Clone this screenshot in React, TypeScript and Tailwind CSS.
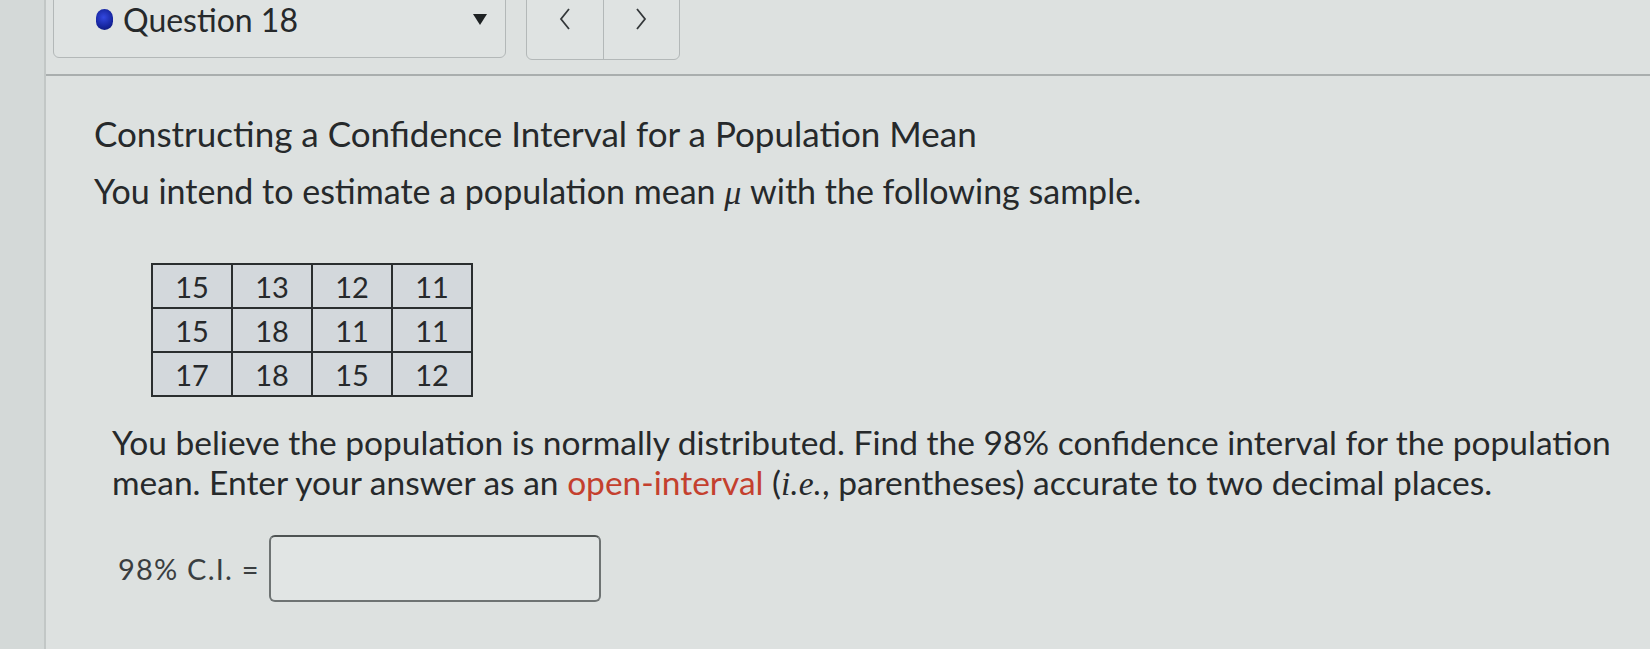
import React from 'react';

const ROWS = [
  [15, 13, 12, 11],
  [15, 18, 11, 11],
  [17, 18, 15, 12],
];

export default function App() {
  return (
    <div className="w-full h-[649px] overflow-hidden bg-[#dde1e0] text-[#26292b] font-['Lato',sans-serif] flex">
      {/* left gutter */}
      <div className="w-[46px] shrink-0 bg-[#d4d9d8] border-r-2 border-[#c2c7c6]" />

      <div className="flex-1 flex flex-col">
        {/* Question nav */}
        <div className="flex items-start h-[76px] border-b-2 border-[#a9aeae]">
          <div className="ml-[7px] mt-[-10px] w-[453px] h-[68px] border border-[#b3b8b8] rounded-b-md bg-[#dfe3e2] flex items-center pb-[9px] pl-[42px] pr-[18px]">
            <span className="w-[17px] h-[21px] rounded-full bg-[radial-gradient(circle_at_45%_40%,#3348e0,#16259e_60%,#0b1466)]" />
            <span className="ml-[10px] text-[32px] leading-[38px]">Question 18</span>
            <svg className="ml-auto" width="14" height="11" viewBox="0 0 14 11"><path d="M0 0 H14 L7 11 Z" fill="#1e2223" /></svg>
          </div>
          <div className="ml-[20px] mt-[-10px] w-[154px] h-[70px] border border-[#b3b8b8] rounded-b-md bg-[#dfe3e2] flex">
            <div className="flex-1 flex items-center justify-center pb-[12px] border-r border-[#b3b8b8]">
              <svg width="13" height="24" viewBox="0 0 13 24" fill="none" stroke="#34383a" strokeWidth="1.8"><path d="M11 2 L3 12 L11 22" /></svg>
            </div>
            <div className="flex-1 flex items-center justify-center pb-[12px]">
              <svg width="13" height="24" viewBox="0 0 13 24" fill="none" stroke="#34383a" strokeWidth="1.8"><path d="M2 2 L10 12 L2 22" /></svg>
            </div>
          </div>
        </div>

        {/* Question body */}
        <div className="pl-[48px] pt-[36px]">
          <h2 className="text-[35px] leading-[42px] whitespace-nowrap">Constructing a Confidence Interval for a Population Mean</h2>
          <p className="mt-[16px] text-[34px] leading-[42px] whitespace-nowrap">
            You intend to estimate a population mean <span className="italic font-['Liberation_Serif',serif]">μ</span> with the following sample.
          </p>

          <table className="mt-[49px] ml-[57px] border-collapse border-2 border-[#2a2e2f]">
            <tbody>
              {ROWS.map((row, i) => (
                <tr key={i}>
                  {row.map((v, j) => (
                    <td key={j} className="w-[80px] h-[44px] border-2 border-[#2a2e2f] bg-[#d3d8dc] text-center text-[29px] leading-none">
                      {v}
                    </td>
                  ))}
                </tr>
              ))}
            </tbody>
          </table>

          <p className="mt-[25px] ml-[18px] text-[33.5px] leading-[40px] whitespace-nowrap">
            You believe the population is normally distributed. Find the 98% confidence interval for the population<br />
            mean. Enter your answer as an <span className="text-[#c4402e]">open-interval</span> (<span className="italic font-['Liberation_Serif',serif]">i.e.</span>, parentheses) accurate to two decimal places.
          </p>

          <div className="mt-[31px] ml-[24px] flex items-center">
            <span className="text-[29px] tracking-[1.2px] text-[#3a3e40]">98% C.I. =</span>
            <div className="ml-[9px] w-[332px] h-[67px] border-2 border-[#6e7373] border-t-[#4e5353] rounded-md bg-[#e1e5e4]" />
          </div>
        </div>
      </div>
    </div>
  );
}
